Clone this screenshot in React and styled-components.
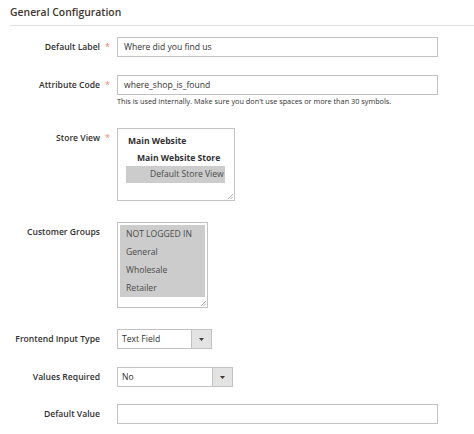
import React from "react";
import styled, { createGlobalStyle } from "styled-components";

const Global = createGlobalStyle`
  html, body { margin: 0; padding: 0; background: #fff; }
  body { font-family: "Open Sans", "Liberation Sans", sans-serif; color: #303030; }
  * { box-sizing: border-box; }
`;

const Page = styled.div`
  width: 474px;
  height: 434px;
  overflow: hidden;
  padding-left: 10px;
`;

const TitleBar = styled.div`
  height: 26px;
  border-bottom: 1px solid #e3e3e3;
  padding-top: 4px;
`;

const Title = styled.h2`
  margin: 0;
  font-size: 10.4px;
  line-height: 16px;
  font-weight: 600;
  color: #41362f;
`;

const Form = styled.div`
  display: flex;
  flex-direction: column;
  margin-left: -10px;
  padding-top: 11px;
`;

const Row = styled.div`
  display: grid;
  grid-template-columns: 100px 17px 1fr;
  align-items: start;
  margin-bottom: ${(p) => p.$space}px;
`;

const Label = styled.div`
  text-align: right;
  font-size: 8.6px;
  font-weight: 600;
  line-height: 20px;
  color: #303030;
  white-space: nowrap;
`;

const Req = styled.span`
  font-size: 9px;
  line-height: 20px;
  color: #e8866c;
  padding-left: 5px;
`;

const Field = styled.div`
  display: flex;
  flex-direction: column;
`;

const Input = styled.div`
  width: ${(p) => p.$w}px;
  height: 20px;
  border: 1px solid #c2c2c2;
  padding: 0 6px;
  font-size: 8.6px;
  line-height: 18px;
  color: #303030;
  background: #fff;
`;

const Note = styled.div`
  font-size: 7.3px;
  line-height: 11px;
  margin-top: 1px;
  color: #303030;
`;

const Select = styled.div`
  width: ${(p) => p.$w}px;
  height: 20px;
  border: 1px solid #c2c2c2;
  display: flex;
  background: #fff;
`;

const SelectValue = styled.div`
  flex: 1;
  font-size: 8.6px;
  line-height: 18px;
  padding-left: 4px;
  color: #303030;
`;

const SelectArrow = styled.div`
  width: 20px;
  border-left: 1px solid #c2c2c2;
  background: #e3e3e3;
  display: flex;
  align-items: center;
  justify-content: center;
`;

const Multi = styled.div`
  position: relative;
  width: ${(p) => p.$w}px;
  height: ${(p) => p.$h}px;
  border: 1px solid #c2c2c2;
  padding: ${(p) => p.$pad};
  background: #fff;
`;

const Option = styled.div`
  height: ${(p) => p.$h}px;
  line-height: ${(p) => p.$h}px;
  font-size: 8.6px;
  font-weight: ${(p) => (p.$bold ? 700 : 400)};
  padding-left: ${(p) => p.$indent}px;
  color: ${(p) => (p.$bold ? "#303030" : "#4a4a4a")};
  background: ${(p) => (p.$selected ? "#cccccc" : "transparent")};
  white-space: nowrap;
  overflow: hidden;
`;

const Resize = styled.svg`
  position: absolute;
  right: 1px;
  bottom: 1px;
`;

const Grip = () => (
  <Resize width="6" height="6" viewBox="0 0 6 6">
    <line x1="6" y1="1" x2="1" y2="6" stroke="#9a9a9a" strokeWidth="0.8" />
    <line x1="6" y1="3.5" x2="3.5" y2="6" stroke="#9a9a9a" strokeWidth="0.8" />
  </Resize>
);

const Arrow = () => (
  <svg width="5" height="3" viewBox="0 0 5 3">
    <polygon points="0,0 5,0 2.5,3" fill="#41362f" />
  </svg>
);

export default function App() {
  return (
    <>
      <Global />
      <Page>
        <TitleBar>
          <Title>General Configuration</Title>
        </TitleBar>
        <Form>
          <Row $space={18}>
            <Label>Default Label</Label>
            <Req>*</Req>
            <Field>
              <Input $w={321}>Where did you find us</Input>
            </Field>
          </Row>
          <Row $space={21}>
            <Label>Attribute Code</Label>
            <Req>*</Req>
            <Field>
              <Input $w={321}>where_shop_is_found</Input>
              <Note>This is used internally. Make sure you don't use spaces or more than 30 symbols.</Note>
            </Field>
          </Row>
          <Row $space={21}>
            <Label>Store View</Label>
            <Req>*</Req>
            <Field>
              <Multi $w={118} $h={73} $pad="4px 9px 0 8px">
                <Option $h={17} $indent={2} $bold>Main Website</Option>
                <Option $h={16} $indent={11} $bold>Main Website Store</Option>
                <Option $h={17} $indent={24} $selected>Default Store View</Option>
                <Grip />
              </Multi>
            </Field>
          </Row>
          <Row $space={21}>
            <Label>Customer Groups</Label>
            <span />
            <Field>
              <Multi $w={91} $h={86} $pad="2px 2px 0 2px">
                <Option $h={18} $indent={6} $selected>NOT LOGGED IN</Option>
                <Option $h={18} $indent={6} $selected>General</Option>
                <Option $h={18} $indent={6} $selected>Wholesale</Option>
                <Option $h={18} $indent={6} $selected>Retailer</Option>
                <Grip />
              </Multi>
            </Field>
          </Row>
          <Row $space={18}>
            <Label>Frontend Input Type</Label>
            <span />
            <Field>
              <Select $w={95}>
                <SelectValue>Text Field</SelectValue>
                <SelectArrow><Arrow /></SelectArrow>
              </Select>
            </Field>
          </Row>
          <Row $space={17}>
            <Label>Values Required</Label>
            <span />
            <Field>
              <Select $w={116}>
                <SelectValue>No</SelectValue>
                <SelectArrow><Arrow /></SelectArrow>
              </Select>
            </Field>
          </Row>
          <Row $space={0}>
            <Label>Default Value</Label>
            <span />
            <Field>
              <Input $w={321} />
            </Field>
          </Row>
        </Form>
      </Page>
    </>
  );
}
